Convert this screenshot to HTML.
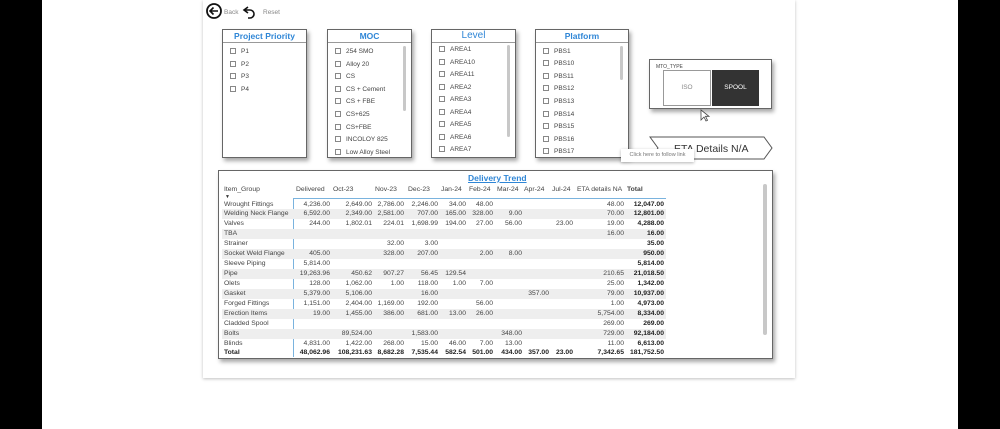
<!DOCTYPE html>
<html><head><meta charset="utf-8"><style>
*{margin:0;padding:0;box-sizing:border-box}
body{width:1000px;height:429px;background:#fff;position:relative;overflow:hidden;font-family:"Liberation Sans",sans-serif;color:#333}
.bar{position:absolute;top:0;height:429px;width:42px;background:#000}
.card{position:absolute;left:203px;top:0;width:592px;height:378px;background:#fff;box-shadow:0 1px 3px rgba(0,0,0,.25)}
.a{position:absolute}
.sl{position:absolute;top:29px;height:129px;background:#fff;border:1px solid #666;box-shadow:2px 3px 4px rgba(0,0,0,.35)}
.sl .h{height:13px;border-bottom:1px solid #999;text-align:center;font-weight:bold;color:#2f86d6;font-size:8.5px;line-height:12px}
.it{position:absolute;left:7px;font-size:6.5px;color:#444;line-height:8px;white-space:nowrap}
.it i{display:inline-block;width:6px;height:6px;border:1px solid #888;vertical-align:-1px;margin-right:5px}
.sb{position:absolute;right:5px;top:16px;width:3px;background:#c8c8c8;border-radius:2px}
.t{position:absolute;left:218px;top:170px;width:555px;height:189px;background:#fff;border:1px solid #666;box-shadow:2px 3px 4px rgba(0,0,0,.35)}
.r{position:absolute;left:3px;width:444px;height:10px;font-size:6.8px;line-height:10px;color:#444}
.r.g{background:#eee}
.r span{position:absolute;text-align:right;white-space:nowrap}
.r span.n{left:2px;text-align:left}
.r.hd span{text-align:left}
.r.tot{font-weight:bold;color:#222}
</style></head><body>
<div class="bar" style="left:0"></div><div class="bar" style="left:958px"></div>
<div class="card"></div>
<svg class="a" style="left:205px;top:2px" width="80" height="18" viewBox="0 0 80 18">
<circle cx="9" cy="9" r="7" fill="none" stroke="#111" stroke-width="1.8"/>
<path d="M13 9H5.5M8.5 5.5L5 9l3.5 3.5" fill="none" stroke="#111" stroke-width="1.6"/>
<text x="19" y="12" font-size="6.5" fill="#888" font-family="Liberation Sans">Back</text>
<path d="M43 5l-4 3 4 3M39 8h6a4 4 0 0 1 0 8h-2" fill="none" stroke="#111" stroke-width="1.6"/>
<text x="58" y="12" font-size="6.5" fill="#888" font-family="Liberation Sans">Reset</text>
</svg>
<div class="sl" style="left:222px;width:85px"><div class="h">Project Priority</div>
<div class="it" style="top:18px"><i></i>P1</div><div class="it" style="top:31px"><i></i>P2</div><div class="it" style="top:43px"><i></i>P3</div><div class="it" style="top:56px"><i></i>P4</div></div>
<div class="sl" style="left:327px;width:85px"><div class="h">MOC</div>
<div class="it" style="top:18px"><i></i>254 SMO</div><div class="it" style="top:31px"><i></i>Alloy 20</div><div class="it" style="top:43px"><i></i>CS</div><div class="it" style="top:56px"><i></i>CS + Cement</div><div class="it" style="top:68px"><i></i>CS + FBE</div><div class="it" style="top:81px"><i></i>CS+625</div><div class="it" style="top:94px"><i></i>CS+FBE</div><div class="it" style="top:106px"><i></i>INCOLOY 825</div><div class="it" style="top:119px"><i></i>Low Alloy Steel</div><div class="sb" style="top:16px;height:65px"></div></div>
<div class="sl" style="left:431px;width:85px"><div class="h" style="font-weight:normal;font-size:10px">Level</div>
<div class="it" style="top:16px"><i></i>AREA1</div><div class="it" style="top:29px"><i></i>AREA10</div><div class="it" style="top:41px"><i></i>AREA11</div><div class="it" style="top:54px"><i></i>AREA2</div><div class="it" style="top:66px"><i></i>AREA3</div><div class="it" style="top:79px"><i></i>AREA4</div><div class="it" style="top:91px"><i></i>AREA5</div><div class="it" style="top:104px"><i></i>AREA6</div><div class="it" style="top:116px"><i></i>AREA7</div><div class="sb" style="top:15px;height:92px"></div></div>
<div class="sl" style="left:535px;width:94px"><div class="h">Platform</div>
<div class="it" style="top:18px"><i></i>PBS1</div><div class="it" style="top:30px"><i></i>PBS10</div><div class="it" style="top:43px"><i></i>PBS11</div><div class="it" style="top:55px"><i></i>PBS12</div><div class="it" style="top:68px"><i></i>PBS13</div><div class="it" style="top:81px"><i></i>PBS14</div><div class="it" style="top:93px"><i></i>PBS15</div><div class="it" style="top:106px"><i></i>PBS16</div><div class="it" style="top:118px"><i></i>PBS17</div><div class="sb" style="top:16px;height:34px"></div></div>
<div class="a" style="left:649px;top:59px;width:123px;height:50px;border:1px solid #666;background:#fff;box-shadow:2px 3px 4px rgba(0,0,0,.35)">
<div class="a" style="left:6px;top:4px;font-size:5px;color:#444">MTO_TYPE</div>
<div class="a" style="left:13px;top:10px;width:48px;height:36px;border:1px solid #999;font-size:6.5px;color:#888;text-align:center;line-height:34px">ISO</div>
<div class="a" style="left:62px;top:10px;width:47px;height:36px;background:#333;font-size:6.5px;color:#fff;text-align:center;line-height:36px">SPOOL</div></div>
<svg class="a" style="left:700px;top:109px" width="12" height="14"><path d="M1 1v10l3-3 2 4 1.5-.7-2-4H9z" fill="#fff" stroke="#444" stroke-width=".8"/></svg>
<svg class="a" style="left:648px;top:136px" width="128" height="24"><path d="M2 1H116L124 12 116 23H2L10 12Z" fill="#fff" stroke="#555" stroke-width="1"/><text x="26" y="16" font-size="10.5" fill="#333" font-family="Liberation Sans">ETA Details N/A</text></svg>
<div class="a" style="left:621px;top:149px;width:73px;height:13px;background:#fff;box-shadow:0 1px 3px rgba(0,0,0,.3);font-size:5.5px;color:#777;text-align:center;line-height:13px">Click here to follow link</div>
<div class="t">
<div class="a" style="left:249px;top:2px;font-size:8.5px;font-weight:bold;color:#2f86d6;text-decoration:underline">Delivery Trend</div>
<div class="r hd" style="top:14px;color:#444"><span class="n">Item_Group</span><span style="left:74px">Delivered</span><span style="left:111px">Oct-23</span><span style="left:153px">Nov-23</span><span style="left:186px">Dec-23</span><span style="left:219px">Jan-24</span><span style="left:247px">Feb-24</span><span style="left:275px">Mar-24</span><span style="left:302px">Apr-24</span><span style="left:330px">Jul-24</span><span style="left:355px">ETA details NA</span><span style="left:405px;font-weight:bold">Total</span></div>
<div class="a" style="left:6px;top:23px;font-size:5px">▼</div>
<div class="a" style="left:74px;top:27px;width:1px;height:159px;background:#7ab3de"></div>
<div class="a" style="left:74px;top:27px;width:373px;height:1px;background:#7ab3de"></div>
<div class="a" style="right:5px;top:13px;width:4px;height:151px;background:#c8c8c8;border-radius:2px"></div>
<div id="rows"></div>
</div>
<script>
var C=[336,294,262,228,200,173,144,117,93,42,2];
var R=[["Wrought Fittings","4,236.00","2,649.00","2,786.00","2,246.00","34.00","48.00","","","","48.00","12,047.00"],
["Welding Neck Flange","6,592.00","2,349.00","2,581.00","707.00","165.00","328.00","9.00","","","70.00","12,801.00"],
["Valves","244.00","1,802.01","224.01","1,698.99","194.00","27.00","56.00","","23.00","19.00","4,288.00"],
["TBA","","","","","","","","","","16.00","16.00"],
["Strainer","","","32.00","3.00","","","","","","","35.00"],
["Socket Weld Flange","405.00","","328.00","207.00","","2.00","8.00","","","","950.00"],
["Sleeve Piping","5,814.00","","","","","","","","","","5,814.00"],
["Pipe","19,263.96","450.62","907.27","56.45","129.54","","","","","210.65","21,018.50"],
["Olets","128.00","1,062.00","1.00","118.00","1.00","7.00","","","","25.00","1,342.00"],
["Gasket","5,379.00","5,106.00","","16.00","","","","357.00","","79.00","10,937.00"],
["Forged Fittings","1,151.00","2,404.00","1,169.00","192.00","","56.00","","","","1.00","4,973.00"],
["Erection Items","19.00","1,455.00","386.00","681.00","13.00","26.00","","","","5,754.00","8,334.00"],
["Cladded Spool","","","","","","","","","","269.00","269.00"],
["Bolts","","89,524.00","","1,583.00","","","348.00","","","729.00","92,184.00"],
["Blinds","4,831.00","1,422.00","268.00","15.00","46.00","7.00","13.00","","","11.00","6,613.00"],
["Total","48,062.96","108,231.63","8,682.28","7,535.44","582.54","501.00","434.00","357.00","23.00","7,342.65","181,752.50"]];
var h="";R.forEach(function(r,i){var cls="r"+(i%2==1&&i<15?" g":"")+(i==15?" tot":"");h+='<div class="'+cls+'" style="top:'+(28.5+i*9.93)+'px"><span class="n">'+r[0]+'</span>';for(var j=1;j<12;j++){if(r[j])h+='<span style="right:'+C[j-1]+'px'+(j==11?';font-weight:bold;color:#222':'')+'">'+r[j]+'</span>';}h+='</div>';});
document.getElementById("rows").innerHTML=h;
</script>
</body></html>
